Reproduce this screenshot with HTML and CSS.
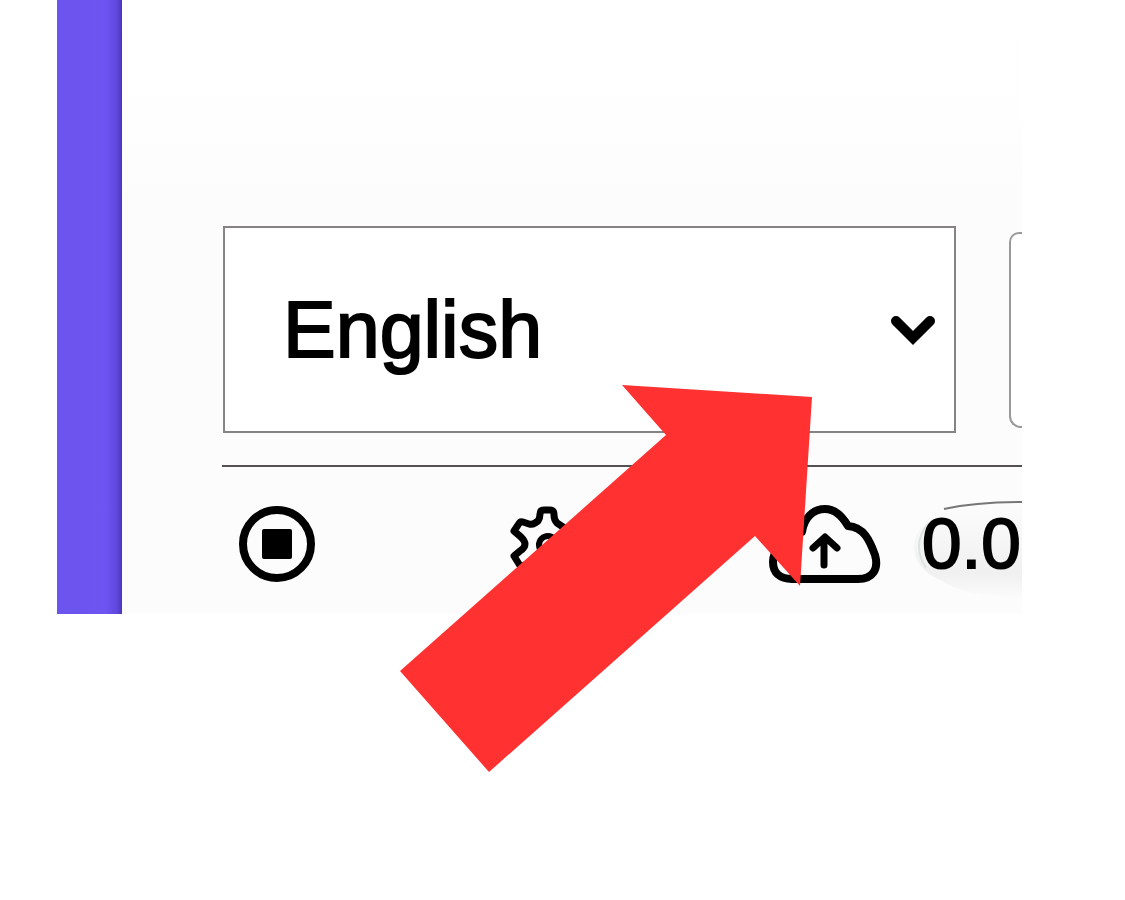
FILE: index.html
```html
<!DOCTYPE html>
<html lang="en">
<head>
<meta charset="utf-8">
<title>Language selection</title>
<link rel="stylesheet" href="styles.css">
</head>
<body>
<main class="frame">
  <div class="rail"></div>
  <section class="panel">
    <div class="fields">
      <div class="picker">
        <select class="language" aria-label="Language">
          <option>English</option>
        </select>
        <svg class="chevron" viewBox="0 0 46 32" aria-hidden="true"><path d="M6 7 23 24 40 7"/></svg>
      </div>
      <button class="next" type="button" aria-label="Next field"></button>
    </div>
    <div class="toolbar">
      <button class="tool" type="button" aria-label="Stop">
        <svg class="icon" width="76" height="76" viewBox="0 0 76 76"><circle cx="38" cy="38" r="34" stroke-width="8"/><rect class="solid" x="23" y="23" width="30" height="30" rx="2"/></svg>
      </button>
      <button class="tool" type="button" aria-label="Settings">
        <svg class="icon" width="76" height="76" viewBox="-37 -38 76 76"><path stroke-width="7" d="M-3-34H3Q7-34 7-29Q7-24 10-21L16-17Q19-15 22-17L25-18Q27-19 29-16L33-10L28-6Q25-3 25 0Q25 3 28 6L33 12L29 19Q27 22 24 21L20 20Q17 19 14 21L9 25Q7 26 7 30Q7 34 4 34H-4Q-7 34-7 30Q-7 26-9 25L-14 21Q-17 19-20 20L-24 22Q-26 23-28 20L-33 12L-27 7Q-22 4-22 0Q-22-3-26-7L-33-13L-29-19Q-27-23-24-22L-18-20Q-15-19-12-21L-9-23Q-7-26-7-30Q-7-34-3-34Z"/><circle cx="1" cy="1" r="9" stroke-width="6"/></svg>
      </button>
      <button class="tool" type="button" aria-label="Upload">
        <svg class="icon" width="114" height="80" viewBox="769 502 114 80"><path stroke-width="8" d="M792 577H858C873 577 879 567 875 553C870 539 864 525 848 524C841 512 834 507 825 507C813 507 804 516 802 530C784 535 773 548 773 560C773 571 780 577 792 577Z"/><path stroke-width="7" d="M824 563V537M813 546 825 535 837 546"/></svg>
      </button>
      <div class="meter">
        <svg class="meter-shape" width="180" height="104" viewBox="0 0 180 104" aria-hidden="true">
          <defs><linearGradient id="shade" x1="0" y1="0" x2="0" y2="1"><stop offset="0" stop-color="#fcfcfc"/><stop offset=".75" stop-color="#f0f0f0"/><stop offset="1" stop-color="#fbfbfb"/></linearGradient></defs>
          <path class="meter-fill" d="M180 5H110Q46 5 24 17Q0 30 0 48Q0 70 26 82Q50 99 110 99H180Z"/>
          <path class="meter-edge" d="M30 11Q62 4 110 4H180"/>
          <path class="meter-side" d="M14 26Q-3 46 12 70"/>
        </svg>
        <output class="value">0.0</output>
      </div>
    </div>
  </section>
</main>
<svg class="pointer" width="412" height="387" viewBox="400 385 412 387" aria-hidden="true"><path d="M622 385 812 397 800 586 755 536 489 772 400 671 666 435Z"/></svg>
</body>
</html>
```
FILE: styles.css
```css
* { box-sizing: border-box; }

body {
  position: relative;
  margin: 0;
  min-height: 100vh;
  background: #fff;
  color: #000;
  font-family: "Liberation Sans", Arial, sans-serif;
}

.frame {
  display: flex;
  margin: 0 103px 0 57px;
  overflow: hidden;
}

.rail {
  flex: 0 0 65px;
  background: linear-gradient(90deg, #6c54ee 0, #6e54f2 75%, #6047dc 92%, #4c35ba 100%);
}

.panel {
  flex: 1;
  min-width: 0;
  padding: 226px 0 28px 100px;
  background: linear-gradient(180deg, #fff 0, #fefefe 120px, #fcfcfc 190px, #fcfcfc 100%);
}

.fields {
  display: flex;
  align-items: center;
  gap: 53px;
  padding-bottom: 32px;
  border-bottom: 2px solid #555152;
}

.picker {
  position: relative;
  flex: 1;
  min-width: 0;
  margin-left: 1px;
}

.language {
  display: block;
  width: 100%;
  height: 207px;
  padding: 0 80px 0 58px;
  border: 2px solid #858384;
  border-radius: 0;
  background: #fff;
  color: #000;
  font: 79px/96px "Liberation Sans", Arial, sans-serif;
  appearance: none;
  -webkit-text-stroke: 2px #000;
}

.chevron {
  position: absolute;
  top: 88px;
  right: 20px;
  width: 46px;
  height: 32px;
  fill: none;
  stroke: #000;
  stroke-width: 10;
  stroke-linecap: round;
  pointer-events: none;
}

.next {
  flex: 0 0 13px;
  height: 196px;
  padding: 0;
  border: 2px solid #999;
  border-right: 0;
  border-radius: 10px 0 0 12px;
  background: #fff;
}

.toolbar {
  display: grid;
  grid-template-columns: 271fr 259fr 145fr 108fr;
  align-items: center;
  padding: 35px 0 0 17px;
}

.tool {
  display: flex;
  justify-self: start;
  padding: 0;
  border: 0;
  background: none;
}

.icon {
  display: block;
  fill: none;
  stroke: #000;
  stroke-linecap: round;
  stroke-linejoin: round;
}

.solid {
  fill: #000;
  stroke: none;
}

.meter {
  position: relative;
  height: 84px;
  padding-left: 8px;
}

.meter-shape {
  position: absolute;
  top: -4px;
  left: 0;
  fill: none;
}

.meter-fill { fill: url(#shade); }

.meter-edge {
  stroke: #777;
  stroke-width: 2;
}

.meter-side {
  stroke: #dce3e3;
  stroke-width: 2;
}

.value {
  position: relative;
  display: block;
  font-size: 71px;
  line-height: 84px;
  white-space: nowrap;
  -webkit-text-stroke: 2px #000;
}

.pointer {
  position: absolute;
  top: 385px;
  left: 400px;
  fill: #ff3131;
  pointer-events: none;
}
```
